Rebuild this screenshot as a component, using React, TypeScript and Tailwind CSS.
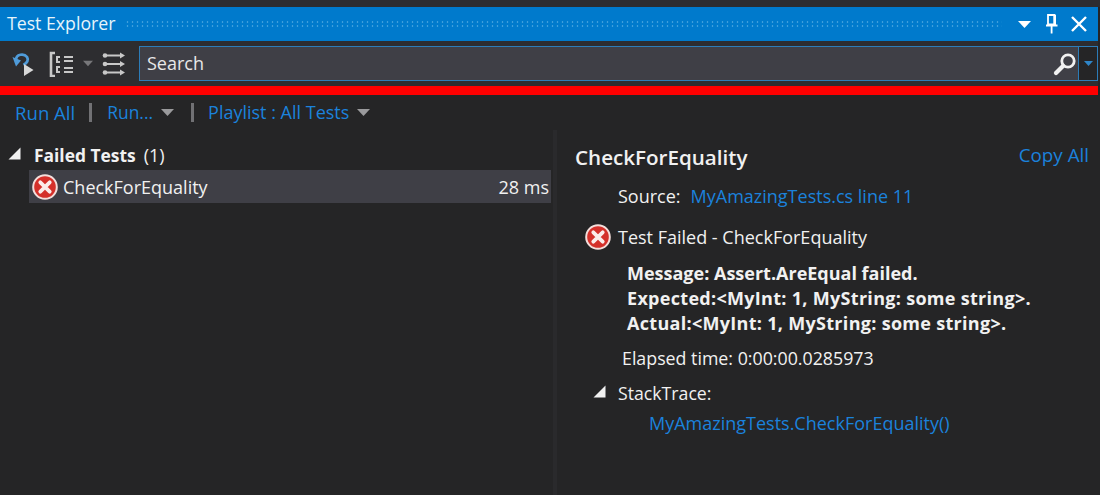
const blue = "text-[#1b82dc]";

function ErrorIcon() {
  return (
    <svg width="26" height="26" viewBox="0 0 26 26" className="shrink-0">
      <circle cx="13" cy="13" r="11.8" fill="#d4302a" stroke="#f3dedb" strokeWidth="2" />
      <path d="M8.3 8.3 17.7 17.7M17.7 8.3 8.3 17.7" stroke="#fbecea" strokeWidth="3.8" strokeLinecap="round" />
    </svg>
  );
}

function Expander({ className }: { className: string }) {
  return (
    <svg width="13" height="13" viewBox="0 0 13 13" className={className}>
      <path d="M12.5 0.5V12.5H0.5Z" fill="#f1f1f1" />
    </svg>
  );
}

function Caret({ color, w = 13 }: { color: string; w?: number }) {
  return (
    <svg width={w} height="7" viewBox="0 0 13 7">
      <path d="M0 0H13L6.5 7Z" fill={color} />
    </svg>
  );
}

function Sep({ className }: { className: string }) {
  return <div className={`w-[3px] h-[19px] bg-[#717174] ${className}`} />;
}

export default function App() {
  return (
    <div className="font-['Open_Sans',sans-serif] w-[1100px] h-[495px] overflow-hidden bg-[#252526] text-[#f1f1f1] flex flex-col">
      <div className="h-[7px] bg-[#2d2d30]" />
      <div className="h-[34px] bg-[#007acc] flex items-center pl-[7px] mr-[2px]">
        <span className="text-[17.7px] text-[#e6f4fb] leading-none">Test Explorer</span>
        <div className="flex-1 h-[9px] ml-[10px] mr-[16px] bg-[radial-gradient(#3f9fdc_1px,transparent_1.2px)] bg-[length:5px_4px]" />
        <Caret color="#fff" />
        <svg width="13" height="20" viewBox="0 0 13 20" className="ml-[14px]">
          <path d="M3 1H9.5V10.5H3Z" fill="none" stroke="#fff" strokeWidth="1.8" />
          <path d="M8.5 1H11V11H8.5ZM1 10.5H12.5V12.5H1ZM5.7 12H7.5V19.5H5.7Z" fill="#fff" />
        </svg>
        <svg width="18" height="18" viewBox="0 0 18 18" className="ml-[12px] mr-[10px]">
          <path d="M2 2 16 16M16 2 2 16" stroke="#fff" strokeWidth="2.4" />
        </svg>
      </div>
      <div className="h-[45px] bg-[#2d2d30] flex items-center pl-[12px] mr-[2px]">
        <svg width="22" height="26" viewBox="0 0 22 26">
          <path d="M4 9C4 3 12 2 15 6C17 9 15 12 11.500 14" fill="none" stroke="#4f9bd9" strokeWidth="2.8" />
          <path d="M0.500 6 9 9.500 4 15.500Z" fill="#4f9bd9" />
          <path d="M12 13 21.500 19 12 25Z" fill="#d8d8d8" />
        </svg>
        <svg width="26" height="26" viewBox="0 0 26 26" className="ml-[15px]">
          <path d="M6 2H2V25H6" fill="none" stroke="#c8c8c8" strokeWidth="2.6" />
          <path d="M11 6H8V11H11M11 16H8V21H11" fill="none" stroke="#c8c8c8" strokeWidth="2" />
          <path d="M15 6H24M15 10H24M15 17H24M15 21H24" stroke="#c8c8c8" strokeWidth="2" />
        </svg>
        <div className="ml-[8px]">
          <Caret color="#77777a" w={10} />
        </div>
        <svg width="24" height="24" viewBox="0 0 24 24" className="ml-[9px]">
          <path d="M3 3.500H19M3 12H19M3 20.500H19" stroke="#c8c8c8" strokeWidth="1.8" />
          <circle cx="3" cy="3.500" r="2.300" fill="#c8c8c8" />
          <circle cx="3" cy="12" r="2.300" fill="#c8c8c8" />
          <circle cx="3" cy="20.500" r="2.300" fill="#c8c8c8" />
          <path d="M18 0.500 23 3.500 18 6.500ZM18 9 23 12 18 15ZM18 17.500 23 20.500 18 23.500Z" fill="#c8c8c8" />
        </svg>
        <div className="ml-[13px] h-[35px] flex-1 border border-[#2c7cb8] bg-[#3f3f46] flex items-center pl-[7px] pr-[1px]">
          <span className="flex-1 text-[18px] text-[#e8e8e8]">Search</span>
          <svg width="24" height="24" viewBox="0 0 24 24">
            <circle cx="15" cy="9" r="6.200" fill="none" stroke="#f1f1f1" strokeWidth="2.8" />
            <path d="M10 14 3 21" stroke="#f1f1f1" strokeWidth="4.200" strokeLinecap="round" />
          </svg>
        </div>
        <div className="h-[35px] w-[19px] border border-l-0 border-[#2c7cb8] bg-[#252526] flex items-center justify-center">
          <Caret color="#2f86c8" w={9} />
        </div>
      </div>
      <div className="h-[9px] bg-[#ff0000] mr-[2px]" />
      <div className={`h-[35px] flex items-center pl-[15px] text-[18px] ${blue}`}>
        <span className="text-[18.6px]">Run All</span>
        <Sep className="ml-[14px] mr-[15px]" />
        <span className="text-[17.4px]">Run...</span>
        <div className="ml-[8px]">
          <Caret color="#9a9a9c" />
        </div>
        <Sep className="ml-[17px] mr-[14px]" />
        <span>Playlist : All Tests</span>
        <div className="ml-[8px]">
          <Caret color="#9a9a9c" />
        </div>
      </div>
      <div className="flex-1 flex">
        <div className="w-[553px] pt-[10px] pl-[8px]">
          <div className="flex items-center h-[30px] pt-[1px]">
            <Expander className="mr-[13px] mb-[4px]" />
            <span className="font-bold text-[17.4px]">Failed Tests</span>
            <span className="text-[18px] ml-[8px]">(1)</span>
          </div>
          <div className="ml-[21px] w-[522px] h-[33px] bg-[#3f3f46] flex items-center pl-[3px] pr-[2px] text-[18px]">
            <ErrorIcon />
            <span className="ml-[5px] flex-1 pt-[2px]">CheckForEquality</span>
            <span className="pt-[2px]">28 ms</span>
          </div>
        </div>
        <div className="w-[4px] bg-[#2a2a2c]" />
        <div className="flex-1 pl-[18px] pr-[11px] pt-[13px] text-[18px]">
          <div className="flex justify-between items-center h-[28px]">
            <span className="font-semibold text-[20.6px]">CheckForEquality</span>
            <span className={`${blue} text-[18.8px] mb-[4px]`}>Copy All</span>
          </div>
          <div className="pl-[43px] mt-[11px] h-[28px] flex items-center">
            <span>Source:</span>
            <span className={`ml-[10px] ${blue}`}>MyAmazingTests.cs line 11</span>
          </div>
          <div className="flex items-center pl-[10px] mt-[13px] h-[28px]">
            <ErrorIcon />
            <span className="ml-[7px]">Test Failed - CheckForEquality</span>
          </div>
          <div className="pl-[52px] mt-[10px] font-bold leading-[25px]">
            <div>Message: Assert.AreEqual failed.</div>
            <div className="tracking-[0.3px]">Expected:&lt;MyInt: 1, MyString: some string&gt;.</div>
            <div className="tracking-[0.3px]">Actual:&lt;MyInt: 1, MyString: some string&gt;.</div>
          </div>
          <div className="pl-[47px] mt-[9px] h-[26px] flex items-center text-[17.8px]">Elapsed time: 0:00:00.0285973</div>
          <div className="flex items-center pl-[18px] mt-[9px] h-[26px]">
            <Expander className="mr-[12px] mb-[4px]" />
            <span className="text-[17.7px]">StackTrace:</span>
          </div>
          <div className={`pl-[74px] mt-[4px] h-[26px] flex items-center ${blue}`}>MyAmazingTests.CheckForEquality()</div>
        </div>
      </div>
    </div>
  );
}
